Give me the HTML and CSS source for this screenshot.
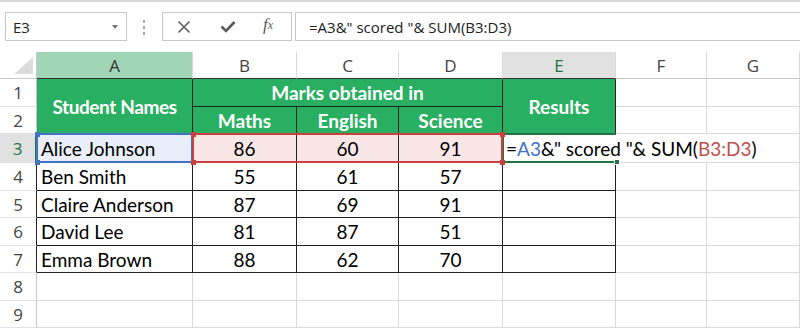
FILE: index.html
```html
<!DOCTYPE html>
<html>
<head>
<meta charset="utf-8">
<link rel="stylesheet" href="styles.css">
</head>
<body>
<div class="fbar">
  <div class="namebox"><span>E3</span><span class="dd"></span></div>
  <div class="dots"><i></i><i></i><i></i></div>
  <div class="btns">
    <span class="b b1"><svg width="14" height="14" viewBox="0 0 14 14"><path d="M1.5 1.5 L12.5 12.5 M12.5 1.5 L1.5 12.5" stroke="#5a5a5a" stroke-width="1.6" fill="none"/></svg></span>
    <span class="b b2"><svg width="16" height="13" viewBox="0 0 16 13"><path d="M1.5 6.5 L6 11 L14.5 2" stroke="#5a5a5a" stroke-width="2.6" fill="none"/></svg></span>
    <span class="b b3 fx">f<sub>x</sub></span>
  </div>
  <div class="formula">=A3&amp;" scored "&amp; SUM(B3:D3)</div>
</div>

<div class="sheet">
  <!-- column headers -->
  <div class="c ch corner"><svg width="20" height="18" viewBox="0 0 20 18"><path d="M19 0 L19 17 L0 17 Z" fill="#dcdcdc"/></svg></div>
  <div class="c ch tb selA">A</div>
  <div class="c ch tb">B</div>
  <div class="c ch tb">C</div>
  <div class="c ch tb">D</div>
  <div class="c ch tb selE">E</div>
  <div class="c ch">F</div>
  <div class="c ch">G</div>

  <!-- row 1 -->
  <div class="c rh">1</div>
  <div class="c h r2 tight">Student Names</div>
  <div class="c h c3">Marks obtained in</div>
  <div class="c h r2">Results</div>
  <div class="c"></div>
  <div class="c"></div>

  <!-- row 2 -->
  <div class="c rh">2</div>
  <div class="c h">Maths</div>
  <div class="c h">English</div>
  <div class="c h">Science</div>
  <div class="c"></div>
  <div class="c"></div>

  <!-- row 3 (placed explicitly, shares its cells with the selection frames) -->
  <div class="c rh rsel r3 col1">3</div>
  <div class="c t name bluefill r3 col2">Alice Johnson</div>
  <div class="c t num redfill r3 col3">86</div>
  <div class="c t num redfill r3 col4">60</div>
  <div class="c t num redfill r3 col5">91</div>
  <div class="c t edit r3 col6"><span>=</span><span class="ref-b">A3</span><span>&amp;" scored "&amp; SUM(</span><span class="ref-r">B3:D3</span><span>)</span><span class="caret"></span></div>
  <div class="c nor r3 col7"></div>
  <div class="c r3 col8"></div>

  <!-- selection frames over row 3 -->
  <div class="rng rng-blue"><i class="hd tl"></i><i class="hd bl"></i></div>
  <div class="rng rng-red"><i class="hd tl"></i><i class="hd bl"></i><i class="hd tr"></i><i class="hd br"></i></div>
  <div class="rng rng-active"><i class="fill"></i></div>

  <!-- row 4 -->
  <div class="c rh rt">4</div>
  <div class="c t name">Ben Smith</div>
  <div class="c t num">55</div>
  <div class="c t num">61</div>
  <div class="c t num">57</div>
  <div class="c t"></div>
  <div class="c"></div>
  <div class="c"></div>

  <!-- row 5 -->
  <div class="c rh rt">5</div>
  <div class="c t name">Claire Anderson</div>
  <div class="c t num">87</div>
  <div class="c t num">69</div>
  <div class="c t num">91</div>
  <div class="c t"></div>
  <div class="c"></div>
  <div class="c"></div>

  <!-- row 6 -->
  <div class="c rh rt">6</div>
  <div class="c t name">David Lee</div>
  <div class="c t num">81</div>
  <div class="c t num">87</div>
  <div class="c t num">51</div>
  <div class="c t"></div>
  <div class="c"></div>
  <div class="c"></div>

  <!-- row 7 -->
  <div class="c rh rt">7</div>
  <div class="c t name">Emma Brown</div>
  <div class="c t num">88</div>
  <div class="c t num">62</div>
  <div class="c t num">70</div>
  <div class="c t"></div>
  <div class="c"></div>
  <div class="c"></div>

  <!-- row 8 -->
  <div class="c rh">8</div>
  <div class="c"></div><div class="c"></div><div class="c"></div><div class="c"></div><div class="c"></div><div class="c"></div><div class="c"></div>

  <!-- row 9 -->
  <div class="c rh">9</div>
  <div class="c"></div><div class="c"></div><div class="c"></div><div class="c"></div><div class="c"></div><div class="c"></div><div class="c"></div>
</div>
</body>
</html>
```

FILE: styles.css
```css
* { box-sizing: border-box; }

html, body {
  margin: 0;
  padding: 0;
  background: #fff;
}

body {
  width: 800px;
  height: 330px;
  overflow: hidden;
  font-family: "Lato", "Liberation Sans", sans-serif;
}

/* ---------- formula bar ---------- */
.fbar {
  height: 52px;
  border-top: 2px solid #d9d9d9;
  display: flex;
  align-items: flex-start;
  padding-top: 10px;
  font-family: "Open Sans", "Liberation Sans", sans-serif;
  font-size: 15px;
  color: #222;
}

.namebox {
  margin-left: 5px;
  width: 122px;
  height: 29px;
  border: 1px solid #c8c8c8;
  display: flex;
  align-items: center;
  justify-content: space-between;
  padding: 0 8px 0 7px;
}

.dd {
  width: 0;
  height: 0;
  border-left: 3.5px solid transparent;
  border-right: 3.5px solid transparent;
  border-top: 4px solid #777;
}

.dots {
  margin: 8px 17px 0 16px;
  display: flex;
  flex-direction: column;
  gap: 3px;
}

.dots i {
  display: block;
  width: 2px;
  height: 3px;
  background: #a8a8a8;
}

.btns {
  width: 130px;
  height: 29px;
  border: 1px solid #c8c8c8;
  display: flex;
  align-items: center;
}

.b {
  display: flex;
  align-items: center;
  justify-content: center;
  height: 100%;
}

.b1 { width: 41px; }
.b2 { width: 47px; }
.b3 { width: 34px; }

.fx {
  font-family: "Liberation Serif", serif;
  font-style: italic;
  font-size: 17px;
  color: #5a5a5a;
  padding-bottom: 3px;
}

.fx sub {
  font-size: 12px;
  vertical-align: -2px;
}

.formula {
  flex: 1;
  margin-left: 3px;
  height: 29px;
  border: 1px solid #c8c8c8;
  border-right: none;
  display: flex;
  align-items: center;
  padding-left: 13px;
  white-space: pre;
}

/* ---------- sheet ---------- */
.sheet {
  display: grid;
  grid-template-columns: 37px 156px 104px 102px 104px 113px 91px 93px;
  grid-template-rows: 27px 28px 27px 29px 28px 27px 28px 27px 28px 27px;
  font-size: 19px;
  color: #000;
}

.c {
  border-right: 1px solid #dadada;
  border-bottom: 1px solid #dadada;
  display: flex;
  align-items: center;
  min-width: 0;
  white-space: nowrap;
}

/* explicit placement of row 3 */
.r3 { grid-row: 4; }
.col1 { grid-column: 1; }
.col2 { grid-column: 2; }
.col3 { grid-column: 3; }
.col4 { grid-column: 4; }
.col5 { grid-column: 5; }
.col6 { grid-column: 6; }
.col7 { grid-column: 7; }
.col8 { grid-column: 8; }

/* column headers */
.ch {
  justify-content: center;
  font-family: "Open Sans", "Liberation Sans", sans-serif;
  font-size: 17px;
  color: #444;
  border-bottom-color: #c8c8c8;
}

.ch.tb { border-bottom-color: #333; }

.corner {
  align-items: flex-end;
  justify-content: flex-end;
  padding: 0 2px 3px 0;
  border-right-color: #c8c8c8;
}

.selA { background: #a0d6b6; color: #333; }
.selE { background: #e1e1e1; color: #217346; }

/* row headers */
.rh {
  justify-content: center;
  font-family: "Open Sans", "Liberation Sans", sans-serif;
  font-size: 17px;
  color: #444;
  border-right-color: #c8c8c8;
  border-bottom-color: #e2e2e2;
}

.rh.rt { border-right-color: #222; }

.rsel {
  background: #e1e1e1;
  color: #217346;
  border-right: 2px solid #217346;
}

/* table cells */
.t { border-color: #222; }

.h {
  background: #29af62;
  color: #fff;
  font-weight: bold;
  justify-content: center;
  border-color: #222;
}

.tight { letter-spacing: -0.4px; }

.r2 { grid-row: span 2; }
.c3 { grid-column: span 3; }

.name { padding-left: 4px; }
.num { justify-content: center; }

.bluefill { background: #e9eef8; }
.redfill { background: #f9e6e6; }

.edit {
  border-right: none;
  border-bottom: none;
  padding-left: 3px;
  overflow: visible;
  position: relative;
  z-index: 2;
}

.ref-b { color: #4472c4; }
.ref-r { color: #c0504d; }

.caret {
  display: inline-block;
  width: 1px;
  height: 24px;
  background: #000;
  margin-left: 5px;
}

.nor { border-right: none; }

/* selection frames */
.rng {
  position: relative;
  margin: -1px 0 0 -1px;
  pointer-events: none;
}

.rng-blue {
  grid-area: 4 / 2 / 5 / 3;
  border: 2px solid #4472c4;
  z-index: 3;
}

.rng-red {
  grid-area: 4 / 3 / 5 / 6;
  border: 2px solid #c9403f;
  z-index: 4;
}

.rng-active {
  grid-area: 4 / 6 / 5 / 7;
  border: 2px solid #217346;
  border-right: none;
  z-index: 3;
}

.hd {
  position: absolute;
  width: 5px;
  height: 5px;
}

.rng-blue .hd { background: #4472c4; }
.rng-red .hd { background: #c9403f; }

.tl { top: -3.5px; left: -3.5px; }
.bl { bottom: -3.5px; left: -3.5px; }
.tr { top: -3.5px; right: -3.5px; }
.br { bottom: -3.5px; right: -3.5px; }

.fill {
  position: absolute;
  right: -4px;
  bottom: -4px;
  width: 6px;
  height: 6px;
  background: #217346;
  border: 1px solid #fff;
}
```
